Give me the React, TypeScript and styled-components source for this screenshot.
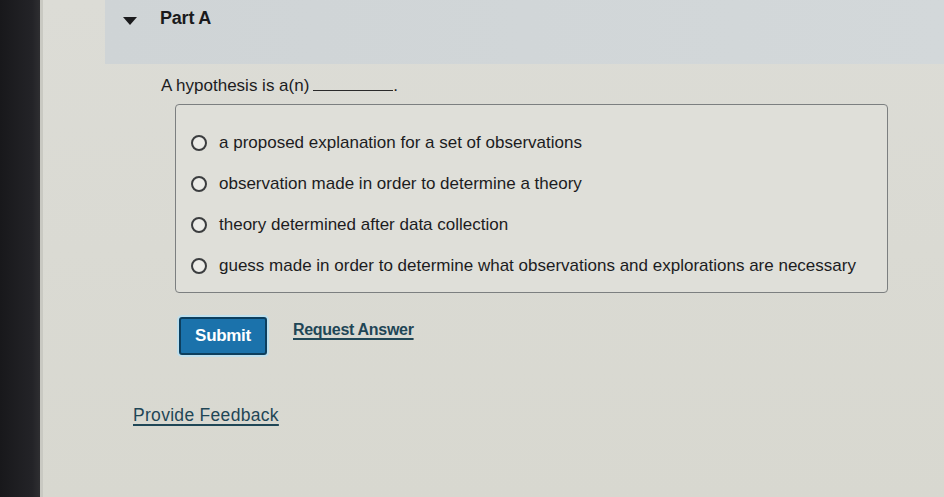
import React, { useState } from 'react';
import styled, { createGlobalStyle } from 'styled-components';

const GlobalStyle = createGlobalStyle`
  html, body {
    margin: 0;
    padding: 0;
    height: 100%;
    background: #d9d9d1;
    font-family: "Liberation Sans", Arial, sans-serif;
  }
  #root {
    height: 100%;
  }
`;

const Page = styled.div`
  display: flex;
  height: 497px;
  width: 944px;
  overflow: hidden;
`;

const Bezel = styled.div`
  width: 40px;
  flex-shrink: 0;
  background: linear-gradient(90deg, #18181b 0%, #232327 80%, #2e2e31 100%);
  border-right: 3px solid #c9c9c2;
`;

const Screen = styled.div`
  flex: 1;
  display: flex;
  flex-direction: column;
  background: linear-gradient(180deg, #dcdcd6 0%, #d8d8d0 100%);
`;

const Header = styled.div`
  margin-left: 62px;
  height: 64px;
  background: linear-gradient(90deg, #cfd4d6 0%, #d3d8da 100%);
  display: flex;
  align-items: flex-start;
  padding-top: 8px;
  box-sizing: border-box;
`;

const Caret = styled.span`
  width: 0;
  height: 0;
  border-left: 7px solid transparent;
  border-right: 7px solid transparent;
  border-top: 8px solid #1b1b1d;
  margin: 9px 0 0 18px;
`;

const PartTitle = styled.h2`
  margin: 0 0 0 23px;
  font-size: 18px;
  font-weight: 700;
  color: #1a1a1c;
  letter-spacing: -0.2px;
`;

const Body = styled.div`
  padding: 12px 0 0 118px;
  display: flex;
  flex-direction: column;
`;

const Question = styled.p`
  margin: 0;
  font-size: 17px;
  color: #1c1c1e;
`;

const Blank = styled.span`
  display: inline-block;
  width: 80px;
  border-bottom: 1px solid #2a2a2a;
  margin-left: 4px;
  vertical-align: baseline;
`;

const Options = styled.div`
  margin: 8px 56px 0 14px;
  border: 1px solid #7c7f80;
  border-radius: 4px;
  background: #dfdfd9;
  padding: 28px 0 16px 15px;
  display: flex;
  flex-direction: column;
  gap: 21px;
`;

const Option = styled.label`
  display: flex;
  align-items: center;
  gap: 12px;
  font-size: 17px;
  color: #1c1c1e;
  cursor: pointer;
`;

const Radio = styled.span<{ $checked: boolean }>`
  width: 12px;
  height: 12px;
  border-radius: 50%;
  border: 2px solid #3b3d3f;
  background: #ecece8;
  display: flex;
  align-items: center;
  justify-content: center;
  &::after {
    content: '';
    width: 6px;
    height: 6px;
    border-radius: 50%;
    background: ${(p) => (p.$checked ? '#1a6fa8' : 'transparent')};
  }
`;

const Actions = styled.div`
  display: flex;
  align-items: flex-start;
  gap: 26px;
  margin: 24px 0 0 18px;
`;

const SubmitButton = styled.button`
  width: 88px;
  height: 38px;
  background: #1b72ab;
  border: 2px solid #0d3f5e;
  border-radius: 3px;
  box-shadow: 0 0 0 2px #bfe0ee;
  color: #ffffff;
  font-family: "Liberation Sans", Arial, sans-serif;
  font-size: 17px;
  font-weight: 700;
  letter-spacing: -0.3px;
  cursor: pointer;
`;

const Link = styled.a<{ $bold?: boolean }>`
  color: #1f4656;
  font-size: ${(p) => (p.$bold ? '16px' : '17.5px')};
  font-weight: ${(p) => (p.$bold ? 700 : 400)};
  text-decoration: underline;
  text-underline-offset: 3px;
  text-decoration-thickness: 2px;
  letter-spacing: ${(p) => (p.$bold ? '-0.3px' : '0.3px')};
  cursor: pointer;
`;

const FeedbackRow = styled.div`
  margin: 50px 0 0 -28px;
`;

const CHOICES = [
  'a proposed explanation for a set of observations',
  'observation made in order to determine a theory',
  'theory determined after data collection',
  'guess made in order to determine what observations and explorations are necessary',
];

const App = () => {
  const [selected, setSelected] = useState<number | null>(null);

  return (
    <Page>
      <GlobalStyle />
      <Bezel />
      <Screen>
        <Header>
          <Caret />
          <PartTitle>Part A</PartTitle>
        </Header>
        <Body>
          <Question>
            A hypothesis is a(n)
            <Blank />.
          </Question>
          <Options>
            {CHOICES.map((choice, i) => (
              <Option key={choice} onClick={() => setSelected(i)}>
                <Radio $checked={selected === i} />
                {choice}
              </Option>
            ))}
          </Options>
          <Actions>
            <SubmitButton>Submit</SubmitButton>
            <Link $bold style={{ marginTop: 4 }}>Request Answer</Link>
          </Actions>
          <FeedbackRow>
            <Link>Provide Feedback</Link>
          </FeedbackRow>
        </Body>
      </Screen>
    </Page>
  );
};

export default App;
